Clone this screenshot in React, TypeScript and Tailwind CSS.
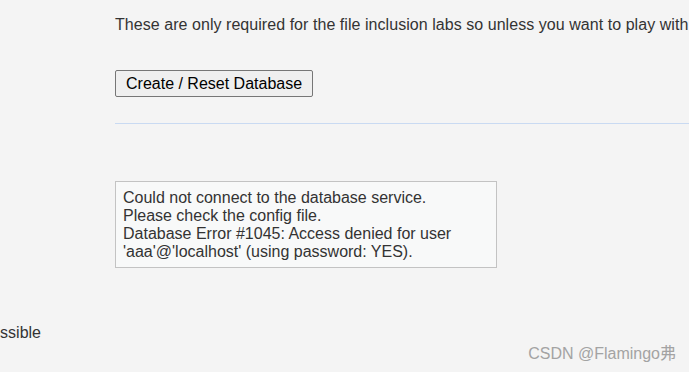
const font = { fontFamily: '"Liberation Sans", Arial, sans-serif' };

export default function App() {
  return (
    <div
      className="relative flex w-[689px] h-[372px] overflow-hidden bg-[#f4f4f4] text-[16px] text-[#333333]"
      style={font}
    >
      {/* sidebar, mostly scrolled out of view */}
      <div className="w-[115px] shrink-0 pt-[324px]">
        <div className="flex justify-end w-[41px] overflow-hidden leading-[18px]">
          <span className="whitespace-nowrap">Impossible</span>
        </div>
      </div>

      <div className="flex-1 min-w-0">
        <p className="mt-[16px] whitespace-nowrap leading-[18px] tracking-[0.05px]">
          These are only required for the file inclusion labs so unless you want to play with them, you can ignore them.
        </p>

        <div className="mt-[36px]">
          <button
            type="button"
            className="h-[27px] px-[10px] rounded-[2px] border border-[#767676] bg-[#efefef] text-[16px] text-black leading-none"
            style={font}
          >
            Create / Reset Database
          </button>
        </div>

        <div className="mt-[26px] h-px bg-[#c9daf2]" />

        <div className="mt-[57px] w-[382px] border border-[#c3c3c3] bg-[#f8f9f9] pt-[7px] pb-[6px] px-[7px] leading-[18px]">
          Could not connect to the database service.
          <br />
          Please check the config file.
          <br />
          Database Error #1045: Access denied for user 'aaa'@'localhost' (using password: YES).
        </div>
      </div>

      <div
        className="absolute right-[13px] bottom-[9px] text-[16px] leading-[18px] text-[#a3a3a3] whitespace-nowrap"
        style={{ fontFamily: '"Liberation Sans", "Noto Sans CJK SC", sans-serif' }}
      >
        CSDN @Flamingo弗
      </div>
    </div>
  );
}
